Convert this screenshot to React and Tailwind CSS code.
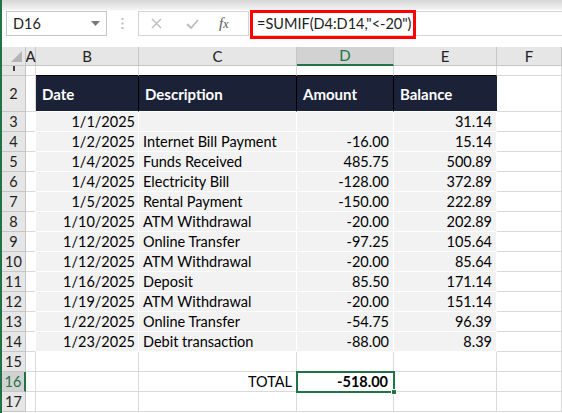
import React from "react";

const FONT = { fontFamily: "Lato, 'Open Sans', 'Liberation Sans', sans-serif" };

const rows = [
  ["1/1/2025", "", "", "31.14"],
  ["1/2/2025", "Internet Bill Payment", "-16.00", "15.14"],
  ["1/4/2025", "Funds Received", "485.75", "500.89"],
  ["1/4/2025", "Electricity Bill", "-128.00", "372.89"],
  ["1/5/2025", "Rental Payment", "-150.00", "222.89"],
  ["1/10/2025", "ATM Withdrawal", "-20.00", "202.89"],
  ["1/12/2025", "Online Transfer", "-97.25", "105.64"],
  ["1/12/2025", "ATM Withdrawal", "-20.00", "85.64"],
  ["1/16/2025", "Deposit", "85.50", "171.14"],
  ["1/19/2025", "ATM Withdrawal", "-20.00", "151.14"],
  ["1/22/2025", "Online Transfer", "-54.75", "96.39"],
  ["1/23/2025", "Debit transaction", "-88.00", "8.39"],
];

function RowHead({ n, active }) {
  return (
    <div
      className={
        "flex items-center justify-center border-b border-r pt-[1px] text-[14.5px] leading-none " +
        (active
          ? "bg-[#d2d2d2] border-b-[#c6c6c6] border-r-2 border-r-[#217346] text-[#217346]"
          : "bg-[#e6e6e6] border-[#c6c6c6] text-[#222]")
      }
    >
      {n}
    </div>
  );
}

function G({ className = "", children }) {
  return (
    <div
      className={
        "flex items-center overflow-hidden whitespace-nowrap border-b border-r border-[#d9d9d9] pt-[1px] text-[14.5px] leading-none text-black " +
        className
      }
    >
      {children}
    </div>
  );
}

function D({ className = "", children }) {
  return (
    <div
      className={
        "flex items-center overflow-hidden whitespace-nowrap border-b border-r border-white bg-[#f2f2f2] pt-[1px] text-[14.5px] leading-none text-black " +
        className
      }
    >
      {children}
    </div>
  );
}

function ColHead({ l, active }) {
  return (
    <div
      className={
        "flex items-center justify-center border-r text-[15px] leading-none " +
        (active
          ? "bg-[#d2d2d2] border-r-[#c6c6c6] border-b-2 border-b-[#217346] text-[#217346]"
          : "bg-[#e6e6e6] border-[#c6c6c6] border-b text-[#222]")
      }
    >
      {l}
    </div>
  );
}

export default function App() {
  return (
    <div className="relative flex h-[413px] w-[562px] overflow-hidden bg-white" style={FONT}>
      <div className="h-full w-[2px] shrink-0 bg-[#217346]" />
      <div className="flex min-w-0 flex-1 flex-col">
        {/* top band */}
        <div className="h-[10px] bg-gradient-to-b from-[#d6d6d6] to-[#f4f4f4]" />
        {/* formula bar */}
        <div className="flex h-[27px] items-start pt-[1px]">
          <div className="ml-[4px] flex h-[25px] w-[101px] items-center justify-between border border-[#c6c6c6] bg-white pl-[6px] pr-[6px]">
            <span className="text-[14.5px] text-[#222]">D16</span>
            <svg width="9" height="5" viewBox="0 0 9 5"><path d="M0 0h9L4.5 5z" fill="#777" /></svg>
          </div>
          <div className="flex h-[25px] w-[31px] items-center justify-center">
            <svg width="3" height="11" viewBox="0 0 3 11">
              <rect x="0.5" y="0" width="2" height="2" fill="#bbb" />
              <rect x="0.5" y="4.5" width="2" height="2" fill="#bbb" />
              <rect x="0.5" y="9" width="2" height="2" fill="#bbb" />
            </svg>
          </div>
          <div className="flex h-[25px] w-[111px] items-center border border-[#d4d4d4] bg-white">
            <svg className="ml-[12px]" width="11" height="11" viewBox="0 0 11 11">
              <path d="M1 1l9 9M10 1l-9 9" stroke="#bcbcbc" strokeWidth="1.4" />
            </svg>
            <svg className="ml-[24px]" width="13" height="10" viewBox="0 0 13 10">
              <path d="M1 5l4 4 7-8" stroke="#bcbcbc" strokeWidth="1.8" fill="none" />
            </svg>
            <span
              className="ml-[20px] text-[15px] italic text-[#555]"
              style={{ fontFamily: "'Liberation Serif', serif" }}
            >
              f<span className="text-[12px]">x</span>
            </span>
          </div>
          <div className="relative ml-[2px] flex h-[25px] flex-1 items-center border-y border-[#d4d4d4] bg-white pl-[6px]">
            <span className="text-[14.5px] text-[#222]">=SUMIF(D4:D14,"&lt;-20")</span>
            <div className="absolute left-[-1px] top-[-2px] h-[29px] w-[166px] border-[3px] border-[#ff0000]" />
          </div>
        </div>
        <div className="h-[10px]" />
        {/* grid */}
        <div className="relative grid grid-cols-[24px_10px_103px_158px_97px_103px_1fr] grid-rows-[19px_10px_36px_repeat(15,20px)]">
          {/* header row */}
          <div className="relative border-b border-r border-[#c6c6c6] bg-[#e6e6e6]">
            <svg className="absolute bottom-[3px] right-[3px]" width="11" height="11" viewBox="0 0 11 11">
              <path d="M11 0V11H0z" fill="#b4b4b4" />
            </svg>
          </div>
          <ColHead l="A" />
          <ColHead l="B" />
          <ColHead l="C" />
          <ColHead l="D" active />
          <ColHead l="E" />
          <ColHead l="F" />

          {/* row 1 */}
          <div className="relative overflow-hidden border-b border-r border-[#c6c6c6] bg-[#e6e6e6]">
            <div className="absolute left-[11px] top-0 h-[5px] w-[1.5px] bg-[#444]" />
          </div>
          <G />
          <G className="border-b-black" />
          <G className="border-b-black" />
          <G className="border-b-black" />
          <G className="border-b-black" />
          <G />

          {/* row 2 */}
          <RowHead n={2} />
          <G />
          {["Date", "Description", "Amount", "Balance"].map((h, i) => (
            <div
              key={h}
              className={
                "flex items-end whitespace-nowrap border-b border-b-white bg-[#1b2238] pb-[9px] pl-[6px] text-[15px] font-bold leading-none text-white " +
                (i < 3 ? "border-r border-r-black" : "")
              }
            >
              {h}
            </div>
          ))}
          <G />

          {/* data */}
          {rows.map((r, i) => (
            <React.Fragment key={i}>
              <RowHead n={i + 3} />
              <G className="border-r-white" />
              <D className="justify-end pr-[3px]">{r[0]}</D>
              <D className="pl-[4px]">{r[1]}</D>
              <D className="justify-end pr-[4px]">{r[2]}</D>
              <D className="justify-end pr-[4px]">{r[3]}</D>
              <G />
            </React.Fragment>
          ))}

          {/* row 15 */}
          <RowHead n={15} />
          <G /><G /><G /><G /><G /><G />
          {/* row 16 */}
          <RowHead n={16} active />
          <G /><G />
          <G className="justify-end pr-[4px]">TOTAL</G>
          <G className="justify-end pr-[5px] font-bold">-518.00</G>
          <G /><G />
          {/* row 17 */}
          <RowHead n={17} />
          <G /><G /><G /><G /><G /><G />

          {/* selection */}
          <div className="pointer-events-none absolute left-[294px] top-[324px] h-[22px] w-[99px] border-2 border-[#217346]" />
          <div className="pointer-events-none absolute left-[389px] top-[342px] h-[6px] w-[6px] border border-white bg-[#217346]" />
        </div>
      </div>
    </div>
  );
}
